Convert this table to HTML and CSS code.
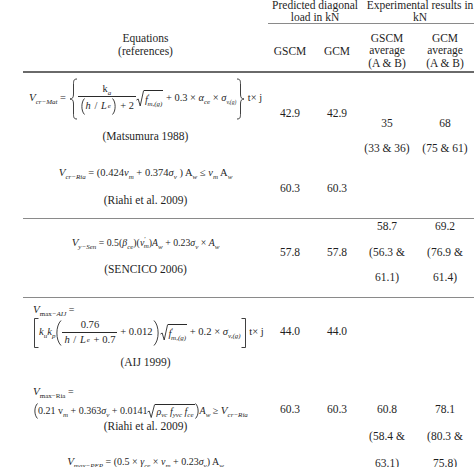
FILE: index.html
```html
<!DOCTYPE html>
<html>
<head>
<meta charset="utf-8">
<link rel="stylesheet" href="styles.css">
</head>
<body>
<div class="tbl">
  <div class="head">
    <div class="c1 h-eq">Equations<br>(references)</div>
    <div class="hgroup pred">
      <div class="hg-title">Predicted diagonal<br>load in kN</div>
      <div class="hg-cols">
        <div class="c2 hsub1">GSCM</div>
        <div class="c3 hsub1">GCM</div>
      </div>
    </div>
    <div class="hgroup exp">
      <div class="hg-title">Experimental results in<br>kN</div>
      <div class="hg-cols">
        <div class="c4 hsub3">GSCM<br>average<br>(A &amp; B)</div>
        <div class="c5 hsub3">GCM<br>average<br>(A &amp; B)</div>
      </div>
    </div>
  </div>

  <!-- Section 1 -->
  <div class="sec sec1">
    <div class="c1 col">
      <div class="eq eq1 m-eq1">
        <i class="V">V</i><sub>cr−Mat</sub> <span class="rel">=</span>
        <svg class="dl" width="9" height="42" viewBox="0 0 9 42"><path d="M8,1 C4.5,1 4.5,3 4.5,7 L4.5,16 C4.5,19.5 3.5,21 1,21 C3.5,21 4.5,22.5 4.5,26 L4.5,35 C4.5,39 4.5,41 8,41"/></svg><span class="frac"><span class="num">k<sub>a</sub></span><span class="den"><svg class="dl" width="5" height="17" viewBox="0 0 5 17"><path d="M4.5,0.5 C1,4 1,13 4.5,16.5"/></svg><i>h</i>&nbsp;/&nbsp;<i>L</i><sub>e</sub><svg class="dl" width="5" height="17" viewBox="0 0 5 17"><path d="M0.5,0.5 C4,4 4,13 0.5,16.5"/></svg>&nbsp;+ 2</span></span><span class="sqrt"><svg class="rad" width="8" height="17" viewBox="0 0 8 17"><path d="M0.5,10 L2.2,9 L4.2,16 L7.6,0.5"/></svg><span class="rb"><i>f</i><sup class="pr">′</sup><sub class="sb2">m,(g)</sub></span></span>
        + 0.3 × <i>α</i><sub>ce</sub> × <i>σ</i><sub class="tiny">v,(g)</sub><svg class="dl" width="9" height="42" viewBox="0 0 9 42"><path d="M1,1 C4.5,1 4.5,3 4.5,7 L4.5,16 C4.5,19.5 5.5,21 8,21 C5.5,21 4.5,22.5 4.5,26 L4.5,35 C4.5,39 4.5,41 1,41"/></svg> t× j
      </div>
      <div class="ref m-ref1">(Matsumura 1988)</div>
      <div class="eq eq-line eq-cr m-eq2">
        <i class="V">V</i><sub>cr−Ria</sub> = (0.424<i>v</i><sub>m</sub> + 0.374<i>σ</i><sub>v</sub> ) A<sub>w</sub> ≤ <i>v</i><sub>m</sub> A<sub>w</sub>
      </div>
      <div class="ref m-ref2">(Riahi et al. 2009)</div>
    </div>
    <div class="c2 col">
      <div class="val m-v1a">42.9</div>
      <div class="val m-v1b">60.3</div>
    </div>
    <div class="c3 col">
      <div class="val m-v1a">42.9</div>
      <div class="val m-v1b">60.3</div>
    </div>
    <div class="c4 col stack s1">
      <div class="val">35</div>
      <div class="val">(33 &amp; 36)</div>
    </div>
    <div class="c5 col stack s1">
      <div class="val">68</div>
      <div class="val">(75 &amp; 61)</div>
    </div>
  </div>

  <!-- Section 2 -->
  <div class="sec sec2">
    <div class="c1 col">
      <div class="eq eq-line eq-sen m-eq3">
        <i class="V">V</i><sub>y−Sen</sub> = 0.5(<i>β</i><sub>ce</sub>)(<i>v</i><sup class="pr">′</sup><sub class="sb2">m</sub>)<i>A</i><sub>w</sub> + 0.23<i>σ</i><sub>v</sub> × <i>A</i><sub>w</sub>
      </div>
      <div class="ref m-ref3">(SENCICO 2006)</div>
    </div>
    <div class="c2 col"><div class="val m-v2">57.8</div></div>
    <div class="c3 col"><div class="val m-v2">57.8</div></div>
    <div class="c4 col stack s2">
      <div class="val">58.7</div>
      <div class="val">(56.3 &amp;</div>
      <div class="val">61.1)</div>
    </div>
    <div class="c5 col stack s2">
      <div class="val">69.2</div>
      <div class="val">(76.9 &amp;</div>
      <div class="val">61.4)</div>
    </div>
  </div>

  <!-- Section 3 -->
  <div class="sec sec3">
    <div class="c1 col">
      <div class="eq lhs m-lhs1"><i class="V">V</i><sub class="up">max</sub><sub class="it">−AIJ</sub> =</div>
      <div class="eq eq-aij m-aij">
        <svg class="dl" width="6" height="30" viewBox="0 0 6 30"><path d="M5.5,0.5 H1.5 V29.5 H5.5"/></svg><i>k</i><sub>u</sub><i>k</i><sub>p</sub><svg class="dl" width="7" height="26" viewBox="0 0 7 26"><path d="M6,0.5 C0.5,6 0.5,20 6,25.5"/></svg><span class="frac"><span class="num">0.76</span><span class="den"><i>h</i>&nbsp;/&nbsp;<i>L</i><sub>e</sub>&nbsp;+ 0.7</span></span> + 0.012<svg class="dl" width="7" height="26" viewBox="0 0 7 26"><path d="M1,0.5 C6.5,6 6.5,20 1,25.5"/></svg><span class="sqrt"><svg class="rad" width="8" height="17" viewBox="0 0 8 17"><path d="M0.5,10 L2.2,9 L4.2,16 L7.6,0.5"/></svg><span class="rb"><i>f</i><sup class="pr">′</sup><sub class="sb2">m,(g)</sub></span></span>
        + 0.2 × <i>σ</i><sub>v,(g)</sub><svg class="dl" width="6" height="30" viewBox="0 0 6 30"><path d="M0.5,0.5 H4.5 V29.5 H0.5"/></svg> t× j
      </div>
      <div class="ref m-ref4">(AIJ 1999)</div>
      <div class="eq lhs m-lhs2"><i class="V">V</i><sub class="up">max</sub><sub class="up">−Ria</sub> =</div>
      <div class="eq lhs eq-ria m-ria">
        <svg class="dl" width="5" height="16" viewBox="0 0 5 16"><path d="M4.5,0.5 C1,4 1,12 4.5,15.5"/></svg>0.21 v<sub>m</sub> + 0.363<i>σ</i><sub>v</sub> + 0.0141<span class="sqrt"><svg class="rad" width="8" height="14" viewBox="0 0 8 14"><path d="M0.5,8 L2.2,7 L4.2,13.5 L7.6,0.5"/></svg><span class="rb rb2"><i>ρ</i><sub>vc</sub> <i>f</i><sub>yvc</sub> <i>f</i><sub>ce</sub></span></span><svg class="dl" width="5" height="16" viewBox="0 0 5 16"><path d="M0.5,0.5 C4,4 4,12 0.5,15.5"/></svg><i>A</i><sub>w</sub> ≥ <i class="V">V</i><sub>cr−Ria</sub>
      </div>
      <div class="ref m-ref5">(Riahi et al. 2009)</div>
      <div class="eq eq-line m-eq5">
        <i class="V">V</i><sub>max−PEP</sub> = (0.5 × <i>γ</i><sub>ce</sub> × <i>v</i><sub>m</sub> + 0.23<i>σ</i><sub>v</sub>) A<sub>w</sub>
      </div>
    </div>
    <div class="c2 col">
      <div class="val m-v3a">44.0</div>
      <div class="val m-v3b">60.3</div>
    </div>
    <div class="c3 col">
      <div class="val m-v3a">44.0</div>
      <div class="val m-v3b">60.3</div>
    </div>
    <div class="c4 col stack s3">
      <div class="val">60.8</div>
      <div class="val">(58.4 &amp;</div>
      <div class="val">63.1)</div>
    </div>
    <div class="c5 col stack s3">
      <div class="val">78.1</div>
      <div class="val">(80.3 &amp;</div>
      <div class="val">75.8)</div>
    </div>
  </div>
</div>
</body>
</html>
```

FILE: styles.css
```css
html, body {
  margin: 0;
  padding: 0;
  background: #ffffff;
}
body {
  width: 474px;
  height: 468px;
  overflow: hidden;
  color: #1f1f1f;
  font-family: "Liberation Serif", "Times New Roman", serif;
  font-size: 11.5px;
}
.tbl {
  margin-left: 23px;
  width: 455px;
}
.c1 { width: 245px; flex: none; }
.c2 { width: 44px; flex: none; }
.c3 { width: 50px; flex: none; }
.c4 { width: 50px; flex: none; }
.c5 { width: 66px; flex: none; }

/* header */
.head {
  display: flex;
  height: 71px;
  border-bottom: 2px solid #6a6a6a;
  line-height: 12.5px;
  text-align: center;
}
.h-eq { padding-top: 32px; }
.hgroup { display: flex; flex-direction: column; }
.hgroup.pred { width: 94px; }
.hgroup.exp { width: 116px; }
.hg-title {
  height: 24px;
  padding-top: 0;
  line-height: 11.5px;
  border-bottom: 1.5px solid #8a8a8a;
  white-space: nowrap;
  box-sizing: border-box;
}
.hg-cols { display: flex; }
.hsub1 { padding-top: 21px; }
.hsub3 { padding-top: 7.5px; }

/* body sections */
.sec {
  display: flex;
  border-bottom: 1.5px solid #8a8a8a;
}
.sec1 { height: 145px; }
.sec2 { height: 78px; }
.sec3 { height: 169px; border-bottom: none; overflow: hidden; }
.col { display: flex; flex-direction: column; }
.val { line-height: 13px; text-align: center; white-space: nowrap; }
.ref { line-height: 13px; text-align: center; }
.stack.s1 { padding-top: 43.5px; gap: 12px; }
.stack.s2 { padding-top: 1px; gap: 12.5px; }
.stack.s3 { padding-top: 104.5px; gap: 14px; }

/* vertical placement */
.m-eq1 { margin-top: 3px; }
.m-ref1 { margin-top: 11.5px; }
.m-eq2 { margin-top: 21.5px; }
.m-ref2 { margin-top: 13.5px; }
.m-v1a { margin-top: 33.5px; }
.m-v1b { margin-top: 62px; }
.m-eq3 { margin-top: 14.5px; }
.m-ref3 { margin-top: 13.5px; }
.m-v2 { margin-top: 27px; }
.m-lhs1 { margin-top: 4px; }
.m-aij { margin-top: 1px; }
.m-ref4 { margin-top: 8.5px; }
.m-lhs2 { margin-top: 15.5px; }
.m-ria { margin-top: 3.5px; }
.m-ref5 { margin-top: 2px; }
.m-eq5 { margin-top: 20.5px; }
.m-v3a { margin-top: 26.5px; }
.m-v3b { margin-top: 65px; }

/* equations */
.eq {
  font-size: 10px;
  white-space: nowrap;
  text-align: center;
}
.eq i { font-style: italic; }
.eq .V { font-size: 11px; }
.eq sub {
  font-size: 7px;
  font-style: italic;
  vertical-align: -2.5px;
  line-height: 0;
}
.eq sub.up { font-style: normal; }
.eq sub.it { font-style: italic; }
.eq sub.tiny { font-size: 5.5px; }
.eq .pr {
  font-size: 7px;
  vertical-align: 5px;
  line-height: 0;
}
.eq .sb2 { margin-left: -2px; }
.eq svg { vertical-align: middle; overflow: visible; }
.eq svg path {
  fill: none;
  stroke: #2a2a2a;
  stroke-width: 0.9;
}
.eq-line { height: 16px; line-height: 16px; }
.eq-cr { font-size: 10.5px; }
.eq-sen { font-size: 9.8px; }
.eq1 { height: 42px; line-height: 42px; font-size: 10.4px; }
.lhs { text-align: left; padding-left: 10px; height: 14px; line-height: 14px; }
.eq-aij {
  height: 30px;
  line-height: 30px;
  text-align: left;
  padding-left: 10px;
  font-size: 10.6px;
}
.eq-ria { height: 16px; line-height: 16px; }
.frac {
  display: inline-flex;
  flex-direction: column;
  align-items: center;
  vertical-align: middle;
  line-height: 12px;
}
.frac .num { padding: 0 2px 1px; }
.frac .den {
  border-top: 0.8px solid #2a2a2a;
  padding: 1px 2px 0;
  display: flex;
  align-items: center;
  gap: 1px;
}
.sqrt {
  display: inline-flex;
  align-items: flex-start;
  vertical-align: middle;
  line-height: 15px;
}
.sqrt .rad { vertical-align: top; }
.rb {
  border-top: 0.8px solid #2a2a2a;
  padding: 0 1px;
  height: 16px;
  line-height: 17px;
}
.rb2 { height: 13px; line-height: 13px; }
.rb2 sub { vertical-align: -1.5px; }
```
